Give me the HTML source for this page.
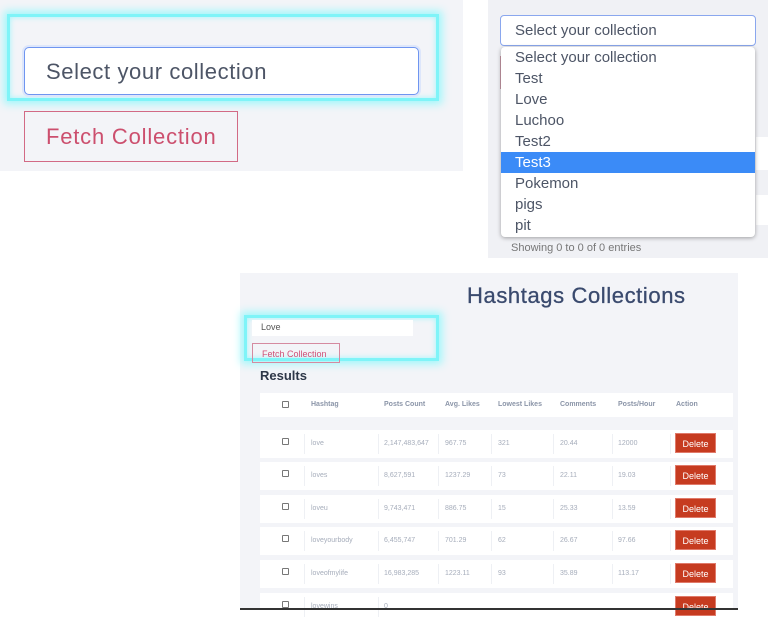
<!DOCTYPE html>
<html><head><style>
*{margin:0;padding:0;box-sizing:border-box}
body{width:768px;height:610px;background:#fff;position:relative;overflow:hidden;font-family:"Liberation Sans",sans-serif}
.a{position:absolute}
.glow{border:3px solid #7ff4f8;box-shadow:0 0 8px 3px #9ff7fb, inset 0 0 6px #9ff6fb}
.row{position:absolute;left:260px;width:473px;height:28px;background:#fff;font-size:7px;color:#a6adbb}
.row span{position:absolute;top:10px}
.cb{position:absolute;left:22px;top:8px;width:7px;height:7px;border:1px solid #777;border-radius:1px;background:#fff}
.del{position:absolute;left:415px;top:3px;width:41px;height:20px;background:#c63b20;color:#fff;font-size:9px;text-align:center;line-height:20px;border:1px solid #e07a6a}
.sep{position:absolute;top:4px;bottom:4px;width:1px;background:#eef0f4}
</style></head><body>
<div class="a" style="left:0;top:0;width:463px;height:171px;background:#f3f4f8"></div>
<div class="a glow" style="left:7px;top:14px;width:432px;height:87px"></div>
<div class="a" style="left:24px;top:47px;width:395px;height:48px;background:#fff;border:1.5px solid #6f95f0;border-radius:5px;box-shadow:0 0 0 2px #dde6fb;font-size:22px;letter-spacing:0.6px;color:#4d5566;padding:11px 0 0 21px">Select your collection</div>
<div class="a" style="left:24px;top:111px;width:214px;height:51px;border:1.5px solid #d26a85;color:#cc4f6e;font-size:22px;letter-spacing:0.8px;padding:12px 0 0 21px">Fetch Collection</div>
<div class="a" style="left:488px;top:0;width:280px;height:258px;background:#f0f1f5"></div>
<div class="a" style="left:500px;top:56px;width:4px;height:33px;background:#c89aa8"></div>
<div class="a" style="left:756px;top:137px;width:12px;height:33px;background:#fff"></div>
<div class="a" style="left:756px;top:195px;width:12px;height:30px;background:#fff"></div>
<div class="a" style="left:500px;top:15px;width:256px;height:31px;background:#fff;border:1.5px solid #8aa7ee;border-radius:4px;font-size:15px;color:#4d5566;padding:6px 0 0 14px">Select your collection</div>
<div class="a" style="left:501px;top:47px;width:254px;height:190px;background:#fff;border-radius:4px;box-shadow:0 1px 4px rgba(0,0,0,.35);font-size:15px;color:#4d5566;line-height:21px;overflow:hidden">
<div style="padding-left:14px">Select your collection</div>
<div style="padding-left:14px">Test</div>
<div style="padding-left:14px">Love</div>
<div style="padding-left:14px">Luchoo</div>
<div style="padding-left:14px">Test2</div>
<div style="padding-left:14px;background:#3b8bf7;color:#fff">Test3</div>
<div style="padding-left:14px">Pokemon</div>
<div style="padding-left:14px">pigs</div>
<div style="padding-left:14px">pit</div>
</div>
<div class="a" style="left:511px;top:242px;font-size:11px;color:#777">Showing 0 to 0 of 0 entries</div>
<div class="a" style="left:240px;top:273px;width:498px;height:337px;background:#f3f4f8"></div>
<div class="a" style="left:467px;top:283px;font-size:22px;letter-spacing:0.6px;color:#3a4a6e;-webkit-text-stroke:0.3px #3a4a6e">Hashtags Collections</div>
<div class="a glow" style="left:244px;top:315px;width:195px;height:46px"></div>
<div class="a" style="left:252px;top:320px;width:161px;height:16px;background:#fff;font-size:9px;color:#555;padding:2px 0 0 9px">Love</div>
<div class="a" style="left:252px;top:343px;width:88px;height:20px;border:1px solid #d58aa0;font-size:9px;color:#d05076;padding:5px 0 0 9px">Fetch Collection</div>
<div class="a" style="left:260px;top:368px;font-size:13px;font-weight:bold;color:#2d3748">Results</div>
<div class="row" style="top:393px;height:24px;color:#8b95a8;font-weight:bold">
<div class="cb" style="left:22px;top:8px"></div>
<span style="left:51px;top:8px">Hashtag</span><span style="left:124px;top:8px">Posts Count</span><span style="left:185px;top:8px">Avg. Likes</span><span style="left:238px;top:8px">Lowest Likes</span><span style="left:300px;top:8px">Comments</span><span style="left:358px;top:8px">Posts/Hour</span><span style="left:416px;top:8px">Action</span>
</div>
<div class="row" style="top:430px"><div class="cb"></div><div class="sep" style="left:44px"></div><div class="sep" style="left:118px"></div><div class="sep" style="left:178px"></div><div class="sep" style="left:231px"></div><div class="sep" style="left:293px"></div><div class="sep" style="left:352px"></div><div class="sep" style="left:410px"></div><span style="left:51px">love</span><span style="left:124px">2,147,483,647</span><span style="left:185px">967.75</span><span style="left:238px">321</span><span style="left:300px">20.44</span><span style="left:358px">12000</span><div class="del">Delete</div></div>
<div class="row" style="top:462px"><div class="cb"></div><div class="sep" style="left:44px"></div><div class="sep" style="left:118px"></div><div class="sep" style="left:178px"></div><div class="sep" style="left:231px"></div><div class="sep" style="left:293px"></div><div class="sep" style="left:352px"></div><div class="sep" style="left:410px"></div><span style="left:51px">loves</span><span style="left:124px">8,627,591</span><span style="left:185px">1237.29</span><span style="left:238px">73</span><span style="left:300px">22.11</span><span style="left:358px">19.03</span><div class="del">Delete</div></div>
<div class="row" style="top:495px"><div class="cb"></div><div class="sep" style="left:44px"></div><div class="sep" style="left:118px"></div><div class="sep" style="left:178px"></div><div class="sep" style="left:231px"></div><div class="sep" style="left:293px"></div><div class="sep" style="left:352px"></div><div class="sep" style="left:410px"></div><span style="left:51px">loveu</span><span style="left:124px">9,743,471</span><span style="left:185px">886.75</span><span style="left:238px">15</span><span style="left:300px">25.33</span><span style="left:358px">13.59</span><div class="del">Delete</div></div>
<div class="row" style="top:527px"><div class="cb"></div><div class="sep" style="left:44px"></div><div class="sep" style="left:118px"></div><div class="sep" style="left:178px"></div><div class="sep" style="left:231px"></div><div class="sep" style="left:293px"></div><div class="sep" style="left:352px"></div><div class="sep" style="left:410px"></div><span style="left:51px">loveyourbody</span><span style="left:124px">6,455,747</span><span style="left:185px">701.29</span><span style="left:238px">62</span><span style="left:300px">26.67</span><span style="left:358px">97.66</span><div class="del">Delete</div></div>
<div class="row" style="top:560px"><div class="cb"></div><div class="sep" style="left:44px"></div><div class="sep" style="left:118px"></div><div class="sep" style="left:178px"></div><div class="sep" style="left:231px"></div><div class="sep" style="left:293px"></div><div class="sep" style="left:352px"></div><div class="sep" style="left:410px"></div><span style="left:51px">loveofmylife</span><span style="left:124px">16,983,285</span><span style="left:185px">1223.11</span><span style="left:238px">93</span><span style="left:300px">35.89</span><span style="left:358px">113.17</span><div class="del">Delete</div></div>
<div class="row" style="top:593px"><div class="cb"></div><div class="sep" style="left:44px"></div><div class="sep" style="left:118px"></div><span style="left:51px">lovewins</span><span style="left:124px">0</span><div class="del">Delete</div></div>
<div class="a" style="left:240px;top:608px;width:498px;height:2px;background:#333"></div>
</body></html>
